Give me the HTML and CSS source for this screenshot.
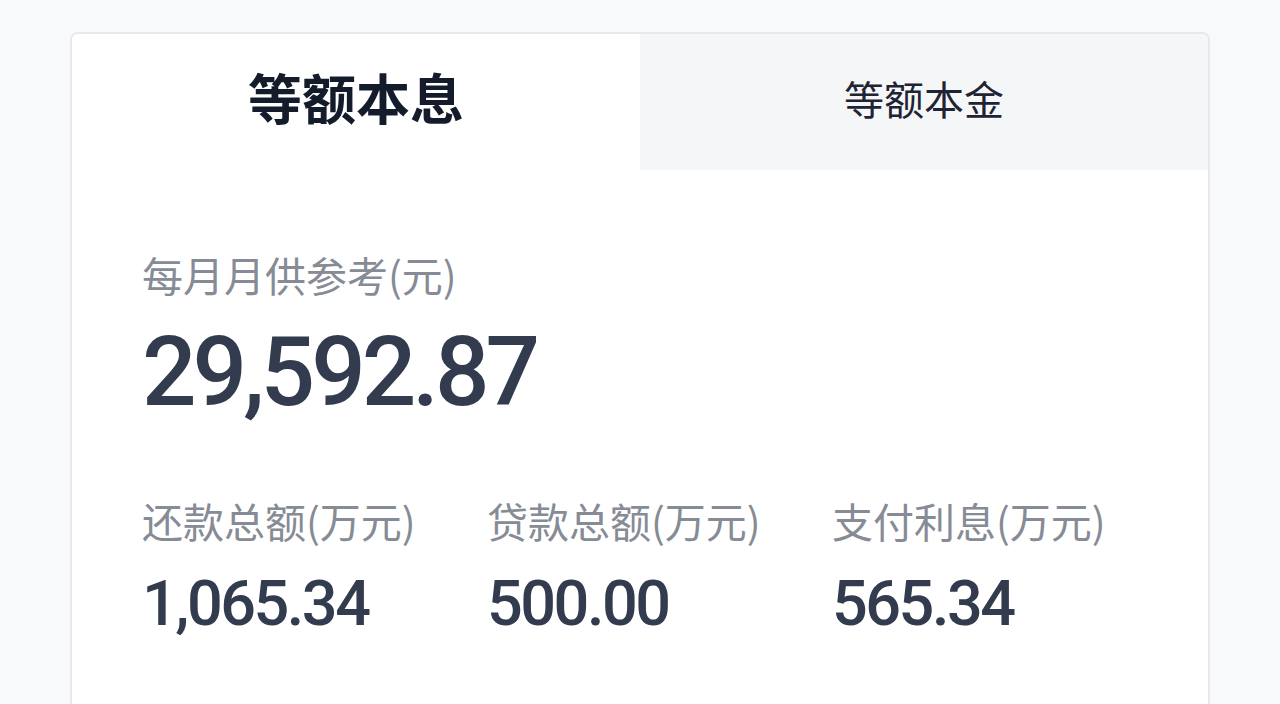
FILE: index.html
```html
<!DOCTYPE html>
<html lang="zh-CN">
<head>
    <meta charset="UTF-8">
    <meta name="viewport" content="width=device-width, initial-scale=1.0">
    <title>房贷计算结果</title>
    <link rel="stylesheet" href="styles.css">
</head>
<body>
    <div class="card">
        <!-- 还款方式切换 -->
        <div class="tabs">
            <div class="tab active">等额本息</div>
            <div class="tab">等额本金</div>
        </div>

        <div class="result">
            <p class="label">每月月供参考(元)</p>
            <p class="monthly">29,592.87</p>

            <div class="summary">
                <div class="summary-item">
                    <p class="label">还款总额(万元)</p>
                    <p class="amount">1,065.34</p>
                </div>
                <div class="summary-item">
                    <p class="label">贷款总额(万元)</p>
                    <p class="amount">500.00</p>
                </div>
                <div class="summary-item">
                    <p class="label">支付利息(万元)</p>
                    <p class="amount">565.34</p>
                </div>
            </div>
        </div>
    </div>
</body>
</html>
```

FILE: styles.css
```css
body {
    background-color: #f8f9fb;
    margin: 0;
    padding: 32px 70px 0;
    font-family: "Noto Sans CJK SC", "Noto Sans", sans-serif;
}

p {
    margin: 0;
}

.card {
    background: #ffffff;
    border: 2px solid #e6e8ec;
    border-bottom: none;
    border-radius: 8px 8px 0 0;
    height: 700px;
    overflow: hidden;
}

.tabs {
    display: grid;
    grid-template-columns: 1fr 1fr;
    height: 136px;
}

.tab {
    display: flex;
    align-items: center;
    justify-content: center;
    padding-bottom: 8px;
    font-size: 40px;
    color: #1e2433;
    background-color: #f5f6f8;
}

.tab.active {
    background-color: #ffffff;
    padding-bottom: 12px;
    font-size: 54px;
    font-weight: 700;
    color: #141b2b;
}

.result {
    padding: 76px 70px 0;
}

.label {
    font-size: 41px;
    line-height: 56px;
    color: #868b95;
}

.monthly {
    font-family: Roboto, "Noto Sans", sans-serif;
    font-size: 96px;
    font-weight: 500;
    letter-spacing: -4px;
    line-height: 120px;
    color: #333b4e;
    margin-top: 10px;
}

.summary {
    display: grid;
    grid-template-columns: repeat(3, 345px);
    margin-top: 60px;
}

.amount {
    font-family: Roboto, "Noto Sans", sans-serif;
    font-size: 63px;
    font-weight: 500;
    letter-spacing: -2.5px;
    line-height: 80px;
    color: #333b4e;
    margin-top: 16px;
}
```
